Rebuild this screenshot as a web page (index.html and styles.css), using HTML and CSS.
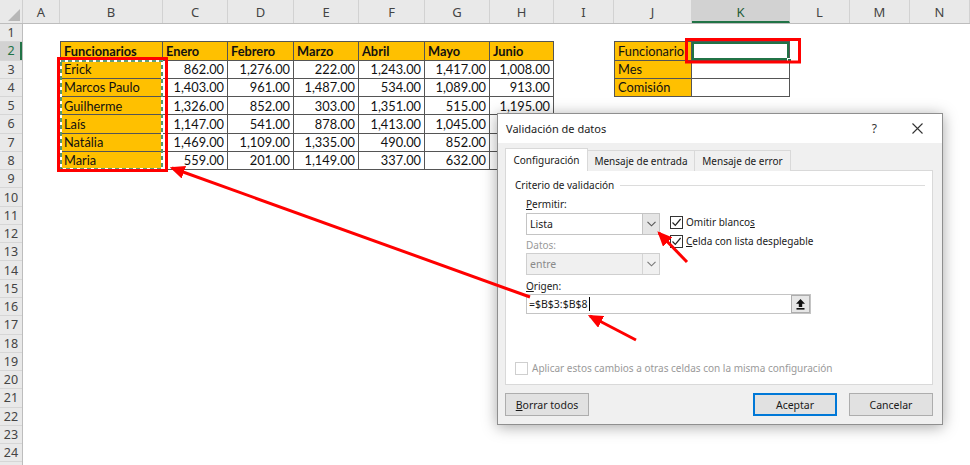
FILE: index.html
```html
<!DOCTYPE html>
<html lang="es">
<head>
<meta charset="utf-8">
<title>Validación de datos</title>
<link rel="stylesheet" href="styles.css">
</head>
<body>
<div class="app">
  <div class="colhead">
    <div class="corner"><svg class="tri" width="12" height="12" viewBox="0 0 12 12"><path d="M12 0 V12 H0 Z" fill="#b7b7b7"/></svg></div>
    <div class="ch">A</div><div class="ch">B</div><div class="ch">C</div><div class="ch">D</div><div class="ch">E</div><div class="ch">F</div><div class="ch">G</div><div class="ch">H</div><div class="ch">I</div><div class="ch">J</div><div class="ch ch-sel">K</div><div class="ch">L</div><div class="ch">M</div><div class="ch">N</div>
  </div>
  <div class="main">
    <div class="rowhead">
      <div class="rh">1</div><div class="rh rh-sel">2</div><div class="rh">3</div><div class="rh">4</div><div class="rh">5</div><div class="rh">6</div><div class="rh">7</div><div class="rh">8</div><div class="rh">9</div><div class="rh">10</div><div class="rh">11</div><div class="rh">12</div><div class="rh">13</div><div class="rh">14</div><div class="rh">15</div><div class="rh">16</div><div class="rh">17</div><div class="rh">18</div><div class="rh">19</div><div class="rh">20</div><div class="rh">21</div><div class="rh">22</div><div class="rh">23</div><div class="rh">24</div><div class="rh rh-last"></div>
    </div>
    <div class="sheet">
      <div class="t1">
        <div class="c hd">Funcionarios</div><div class="c hd">Enero</div><div class="c hd">Febrero</div><div class="c hd">Marzo</div><div class="c hd">Abril</div><div class="c hd">Mayo</div><div class="c hd">Junio</div>
        <div class="c nm">Erick</div><div class="c v">862.00</div><div class="c v">1,276.00</div><div class="c v">222.00</div><div class="c v">1,243.00</div><div class="c v">1,417.00</div><div class="c v">1,008.00</div>
        <div class="c nm">Marcos Paulo</div><div class="c v">1,403.00</div><div class="c v">961.00</div><div class="c v">1,487.00</div><div class="c v">534.00</div><div class="c v">1,089.00</div><div class="c v">913.00</div>
        <div class="c nm">Guilherme</div><div class="c v">1,326.00</div><div class="c v">852.00</div><div class="c v">303.00</div><div class="c v">1,351.00</div><div class="c v">515.00</div><div class="c v">1,195.00</div>
        <div class="c nm">Laís</div><div class="c v">1,147.00</div><div class="c v">541.00</div><div class="c v">878.00</div><div class="c v">1,413.00</div><div class="c v">1,045.00</div><div class="c v"></div>
        <div class="c nm">Natália</div><div class="c v">1,469.00</div><div class="c v">1,109.00</div><div class="c v">1,335.00</div><div class="c v">490.00</div><div class="c v">852.00</div><div class="c v"></div>
        <div class="c nm">Maria</div><div class="c v">559.00</div><div class="c v">201.00</div><div class="c v">1,149.00</div><div class="c v">337.00</div><div class="c v">632.00</div><div class="c v"></div>
      </div>
      <div class="t2">
        <div class="c nm">Funcionario</div><div class="c v k2"><span class="handle"></span></div>
        <div class="c nm">Mes</div><div class="c v"></div>
        <div class="c nm">Comisión</div><div class="c v"></div>
      </div>
    </div>
  </div>

  <div class="dialog">
    <div class="titlebar">
      <span class="title">Validación de datos</span>
      <span class="help">?</span>
      <svg class="close" width="11" height="11" viewBox="0 0 11 11"><path d="M0.5 0.5 L10.5 10.5 M10.5 0.5 L0.5 10.5" stroke="#333" stroke-width="1.1" fill="none"/></svg>
    </div>
    <div class="body">
      <div class="tabs">
        <div class="tab active">Configuración</div>
        <div class="tab">Mensaje de entrada</div>
        <div class="tab">Mensaje de error</div>
      </div>
      <div class="panel">
        <div class="legend"><span>Criterio de validación</span><span class="rule"></span></div>
        <div class="crit">
          <div class="leftcol">
            <div class="lbl lbl-first"><u>P</u>ermitir:</div>
            <div class="combo">
              <span class="combo-text">Lista</span>
              <span class="combo-btn hot"><svg width="9" height="6" viewBox="0 0 9 6"><path d="M0.5 0.8 L4.5 4.8 L8.5 0.8" stroke="#555" stroke-width="1.1" fill="none"/></svg></span>
            </div>
            <div class="lbl lbl-dis">Datos:</div>
            <div class="combo combo-dis">
              <span class="combo-text">entre</span>
              <span class="combo-btn"><svg width="9" height="6" viewBox="0 0 9 6"><path d="M0.5 0.8 L4.5 4.8 L8.5 0.8" stroke="#777" stroke-width="1.1" fill="none"/></svg></span>
            </div>
          </div>
          <div class="rightcol">
            <div class="chk"><span class="box"><svg width="11" height="11" viewBox="0 0 11 11"><path d="M1.5 5.5 L4.3 8.4 L9.6 2" stroke="#222" stroke-width="1.2" fill="none"/></svg></span><span>Omitir blanco<u>s</u></span></div>
            <div class="chk"><span class="box"><svg width="11" height="11" viewBox="0 0 11 11"><path d="M1.5 5.5 L4.3 8.4 L9.6 2" stroke="#222" stroke-width="1.2" fill="none"/></svg></span><span><u>C</u>elda con lista desplegable</span></div>
          </div>
        </div>
        <div class="lbl lbl-origen"><u>O</u>rigen:</div>
        <div class="input">
          <span class="input-text">=$B$3:$B$8<span class="caret"></span></span>
          <span class="upbtn"><svg width="11" height="12" viewBox="0 0 11 12"><path d="M5.5 1 L10 5.8 H7.2 V9 H3.8 V5.8 H1 Z" fill="#111"/><rect x="1.5" y="10" width="8" height="1.6" fill="#111"/></svg></span>
        </div>
        <div class="chk chk-dis"><span class="box"></span><span>Aplicar estos cambios a otras celdas con la misma configuración</span></div>
      </div>
      <div class="buttons">
        <div class="btn"><u>B</u>orrar todos</div>
        <div class="spacer"></div>
        <div class="btn btn-default">Aceptar</div>
        <div class="btn">Cancelar</div>
      </div>
    </div>
  </div>

  <svg class="marks" width="970" height="465" viewBox="0 0 970 465">
    <defs>
      <marker id="ah" markerWidth="5" markerHeight="4.4" refX="4.2" refY="2.2" orient="auto" markerUnits="strokeWidth">
        <path d="M0 0 L5 2.2 L0 4.4 Z" fill="#ff0000"/>
      </marker>
    </defs>
    <rect x="61" y="61" width="101" height="108" fill="none" stroke="#ffffff" stroke-width="2"/>
    <rect x="61" y="61" width="101" height="108" fill="none" stroke="#2e7d4f" stroke-width="1.6" stroke-dasharray="4 3"/>
    <rect x="58.5" y="58.5" width="108" height="112" fill="none" stroke="#ff0000" stroke-width="3"/>
    <rect x="686.5" y="39.5" width="113" height="22.5" fill="none" stroke="#ff0000" stroke-width="3"/>
    <line x1="530" y1="297" x2="172" y2="168" stroke="#ff0000" stroke-width="3" marker-end="url(#ah)"/>
    <line x1="687" y1="262" x2="659" y2="233" stroke="#ff0000" stroke-width="3" marker-end="url(#ah)"/>
    <line x1="636" y1="340" x2="590" y2="316" stroke="#ff0000" stroke-width="3" marker-end="url(#ah)"/>
  </svg>
</div>
</body>
</html>
```

FILE: styles.css
```css
* { box-sizing: border-box; }
html, body { margin: 0; padding: 0; }
body { width: 970px; height: 465px; overflow: hidden; background: #fff; }

.app { position: relative; width: 970px; height: 465px; overflow: hidden; font-family: Lato, "Liberation Sans", sans-serif; }

/* column header */
.colhead {
  display: grid;
  grid-template-columns: 23px 37px 103px 65px 66px 65px 66px 65px 64px 60px 78px 98px 60px 60px 60px;
  height: 24px;
  background: #e9e9e9;
  border-bottom: 1px solid #bdbdbd;
}
.corner { position: relative; border-right: 1px solid #cfcfcf; }
.tri { position: absolute; right: 2px; bottom: 2px; }
.ch {
  display: flex; align-items: center; justify-content: center;
  border-right: 1px solid #d2d2d2;
  font-family: "Noto Sans", "Open Sans", sans-serif;
  font-size: 13px; color: #444;
  padding-top: 1px;
}
.ch-sel { background: #d2d2d2; color: #1e5c38; border-bottom: 2px solid #217346; padding-top: 3px; }

/* body */
.main { display: flex; }
.rowhead { width: 23px; flex: none; background: #e9e9e9; border-right: 1px solid #bdbdbd; }
.rh {
  height: 18.27px;
  display: flex; align-items: center; justify-content: center;
  border-bottom: 1px solid #d6d6d6;
  font-family: "Noto Sans", "Open Sans", sans-serif;
  font-size: 12.5px; color: #444;
}
.rh-last { border-bottom: none; }
.rh-sel { background: #d2d2d2; color: #217346; box-shadow: inset -2px 0 0 #217346; }

.sheet {
  display: grid;
  grid-template-columns: 37px 103px 65px 66px 65px 66px 65px 64px 60px 78px 98px 60px 60px 60px;
  grid-template-rows: repeat(25, 18.27px);
  width: 947px;
}

.t1 {
  grid-column: 2 / 9; grid-row: 2 / 9;
  display: grid;
  grid-template-columns: 102px 65px 66px 65px 66px 65px 64px;
  grid-template-rows: repeat(7, 1fr);
  border-top: 1px solid #555;
  border-left: 1px solid #555;
  margin-top: -1px;
}
.t2 {
  grid-column: 10 / 12; grid-row: 2 / 5;
  display: grid;
  grid-template-columns: 77px 98px;
  grid-template-rows: repeat(3, 1fr);
  border-top: 1px solid #555;
  border-left: 1px solid #555;
  margin-top: -1px;
}
.c {
  border-right: 1px solid #555;
  border-bottom: 1px solid #555;
  font-size: 12.8px; color: #111;
  display: flex; align-items: center;
  padding: 0 3px;
  white-space: nowrap; overflow: hidden;
}
.hd { background: #ffc000; font-weight: 700; }
.nm { background: #ffc000; }
.v { background: #fff; justify-content: flex-end; }
.k2 { position: relative; box-shadow: inset 0 0 0 2px #217346; overflow: visible; }
.handle { position: absolute; right: -3px; bottom: -3px; width: 5px; height: 5px; background: #217346; border: 1px solid #fff; }

/* dialog */
.dialog {
  position: absolute; left: 497px; top: 113px;
  width: 446px; height: 312px;
  background: #f0f0f0;
  border: 1px solid #8f8f8f;
  box-shadow: 0 2px 14px rgba(0,0,0,0.35);
  font-family: "Noto Sans", "Open Sans", sans-serif;
  font-size: 10px; color: #1a1a1a;
  display: flex; flex-direction: column;
  white-space: nowrap;
}
.titlebar { height: 29px; background: #fff; display: flex; align-items: center; padding-left: 8px; flex: none; }
.title { font-size: 11px; flex: 1; color: #222; }
.help { font-size: 12px; color: #333; margin-right: 35px; }
.close { margin-right: 19px; }
.body { flex: 1; display: flex; flex-direction: column; padding: 5px 9px 0 7px; }
.tabs { display: flex; height: 22px; position: relative; z-index: 1; }
.tab {
  margin-top: 2px; height: 21px;
  border: 1px solid #d9d9d9; border-bottom: none; border-left: none;
  background: #f0f0f0;
  display: flex; align-items: center; justify-content: center;
}
.tab.active { margin-top: 0; height: 23px; background: #fff; border-left: 1px solid #d9d9d9; width: 83px; }
.tab:nth-child(2) { width: 107px; }
.tab:nth-child(3) { width: 96px; }
.panel {
  height: 215px; background: #fff; border: 1px solid #d9d9d9;
  display: flex; flex-direction: column;
  padding-left: 9px;
}
.legend { display: flex; align-items: center; height: 16px; margin-top: 6px; }
.legend .rule { flex: 1; height: 1px; background: #dcdcdc; margin: 1px 7px 0 6px; }
.crit { display: flex; padding-left: 11px; }
.leftcol { width: 134px; display: flex; flex-direction: column; }
.lbl { height: 14px; line-height: 14px; }
.lbl-first { margin-top: 4px; }
.lbl-dis { margin-top: 3px; color: #9a9a9a; }
.lbl-origen { margin-top: 4px; margin-left: 11px; }
.combo { height: 22px; margin-top: 2px; border: 1px solid #c4c4c4; background: #fff; display: flex; align-items: center; }
.combo-dis { margin-top: 1px; background: #f0f0f0; border-color: #cfcfcf; color: #8a8a8a; }
.combo-text { flex: 1; padding-left: 3px; font-size: 10.5px; }
.combo-btn { width: 17px; height: 100%; display: flex; align-items: center; justify-content: center; border-left: 1px solid #d4d4d4; }
.combo-btn.hot { background: #e5e5e5; border-left-color: #c4c4c4; }
.rightcol { margin-left: 10px; margin-top: 20px; display: flex; flex-direction: column; }
.rightcol .chk + .chk { margin-top: 1px; }
.chk { display: flex; align-items: center; height: 18px; }
.box { width: 13px; height: 13px; border: 1px solid #333; background: #fff; margin-right: 3px; display: flex; align-items: center; justify-content: center; flex: none; }
.chk-dis { margin-top: 45px; color: #9a9a9a; }
.chk-dis .box { border-color: #cfcfcf; margin-right: 4px; }
.input {
  margin-top: 1px; margin-left: 11px; width: 285px; height: 20px;
  border: 1px solid #c4c4c4; background: #fff;
  display: flex; align-items: center;
}
.input-text { flex: 1; padding-left: 2px; display: flex; align-items: center; font-size: 10.5px; }
.caret { width: 1px; height: 14px; background: #000; margin-left: 1px; }
.upbtn { width: 19px; height: 18px; background: #e6e6e6; border: 1px solid #adadad; display: flex; align-items: center; justify-content: center; }
.buttons { display: flex; margin-top: 8px; height: 23px; }
.spacer { flex: 1; }
.btn {
  width: 84px; height: 23px;
  background: #e1e1e1; border: 1px solid #adadad;
  display: flex; align-items: center; justify-content: center;
  font-size: 10.5px;
}
.btn + .btn { margin-left: 12px; }
.btn-default { border: 1px solid #0078d7; box-shadow: inset 0 0 0 1px #0078d7; }

.marks { position: absolute; left: 0; top: 0; pointer-events: none; }
```
